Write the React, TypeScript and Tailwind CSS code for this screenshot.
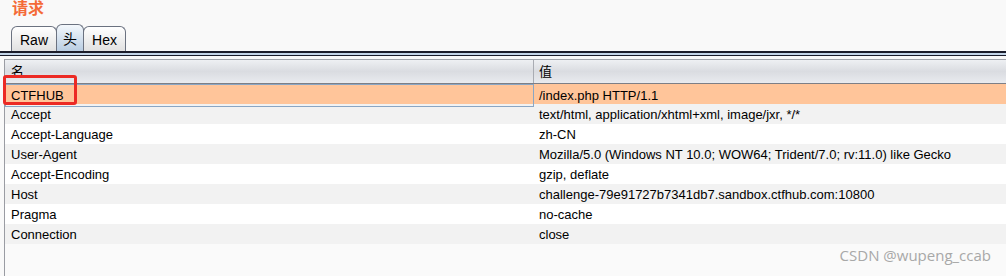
import React from "react";

const rows: [string, string][] = [
  ["CTFHUB", "/index.php HTTP/1.1"],
  ["Accept", "text/html, application/xhtml+xml, image/jxr, */*"],
  ["Accept-Language", "zh-CN"],
  ["User-Agent", "Mozilla/5.0 (Windows NT 10.0; WOW64; Trident/7.0; rv:11.0) like Gecko"],
  ["Accept-Encoding", "gzip, deflate"],
  ["Host", "challenge-79e91727b7341db7.sandbox.ctfhub.com:10800"],
  ["Pragma", "no-cache"],
  ["Connection", "close"],
];

function Tab({ label, active }: { label: string; active?: boolean }) {
  return (
    <div
      className={
        active
          ? "h-[27px] px-[6px] pt-[2px] -ml-[1px] flex items-center rounded-t-[6px] border border-b-0 border-[#6b7280] bg-gradient-to-b from-[#f4f8fc] to-[#b9cde2] text-[14px] text-black"
          : "h-[25px] px-[8px] pt-[2px] -ml-[1px] flex items-center rounded-t-[6px] border border-b-0 border-[#6b7280] bg-gradient-to-b from-[#ffffff] to-[#e1e1e1] text-[14px] text-black"
      }
    >
      {label}
    </div>
  );
}

export default function App() {
  return (
    <div
      className="relative w-[1006px] h-[276px] overflow-hidden bg-[#f9f9f9]"
      style={{ fontFamily: '"Liberation Sans", Arial, "Noto Sans CJK SC", sans-serif' }}
    >
      {/* title */}
      <div className="h-[22px] pl-[12px] text-[16px] font-bold leading-[18px] text-[#f46a37]">请求</div>

      {/* tabs */}
      <div className="flex items-end h-[29px] pl-[12px]">
        <Tab label="Raw" />
        <Tab label="头" active />
        <Tab label="Hex" />
      </div>
      <div className="border-t-2 border-[#1b1d2b] h-[4px] bg-[#c3d5e8]" />
      <div className="h-[1px] bg-[#1b1d2b]" />
      <div className="h-[3px]" />

      {/* table */}
      <div className="ml-[4px] border-l border-[#9a9ca3] h-[230px] bg-[#fafafa] text-[13px] text-black">
        <div className="grid grid-cols-[529px_1fr] h-[25px] border-t border-b border-t-[#a0a3aa] border-b-[#7d7f86] bg-gradient-to-b from-[#eef0f3] via-[#dadce1] to-[#e9ebef]">
          <div className="pl-[6px] pt-[1px] flex items-center border-r border-[#a9acb3]">名</div>
          <div className="pl-[5px] pt-[1px] flex items-center">值</div>
        </div>
        {rows.map(([k, v], i) => (
          <div
            key={k}
            className={
              i === 0
                ? "grid grid-cols-[529px_1fr] h-[20px] bg-[#ffc59a]"
                : i % 2 === 1
                ? "grid grid-cols-[529px_1fr] h-[20px] bg-[#f2f2f2]"
                : "grid grid-cols-[529px_1fr] h-[20px] bg-white"
            }
          >
            <div
              className={
                i === 0
                  ? "pl-[5px] pt-[1px] flex items-center border border-[#8aa6c4]"
                  : "pl-[6px] pt-[1px] flex items-center"
              }
            >
              {k}
            </div>
            <div className="pl-[5px] pt-[1px] flex items-center">{v}</div>
          </div>
        ))}
      </div>

      {/* red highlight box */}
      <div className="absolute left-[3px] top-[75px] w-[74px] h-[30px] border-[3px] border-[#ec2a24] rounded-[3px]" />

      {/* watermark */}
      <div
        className="absolute right-[15px] top-[244px] text-[15px] text-[#a8a8a8]"
        style={{ fontFamily: '"Open Sans", "Liberation Sans", sans-serif' }}
      >
        CSDN @wupeng_ccab
      </div>
    </div>
  );
}
